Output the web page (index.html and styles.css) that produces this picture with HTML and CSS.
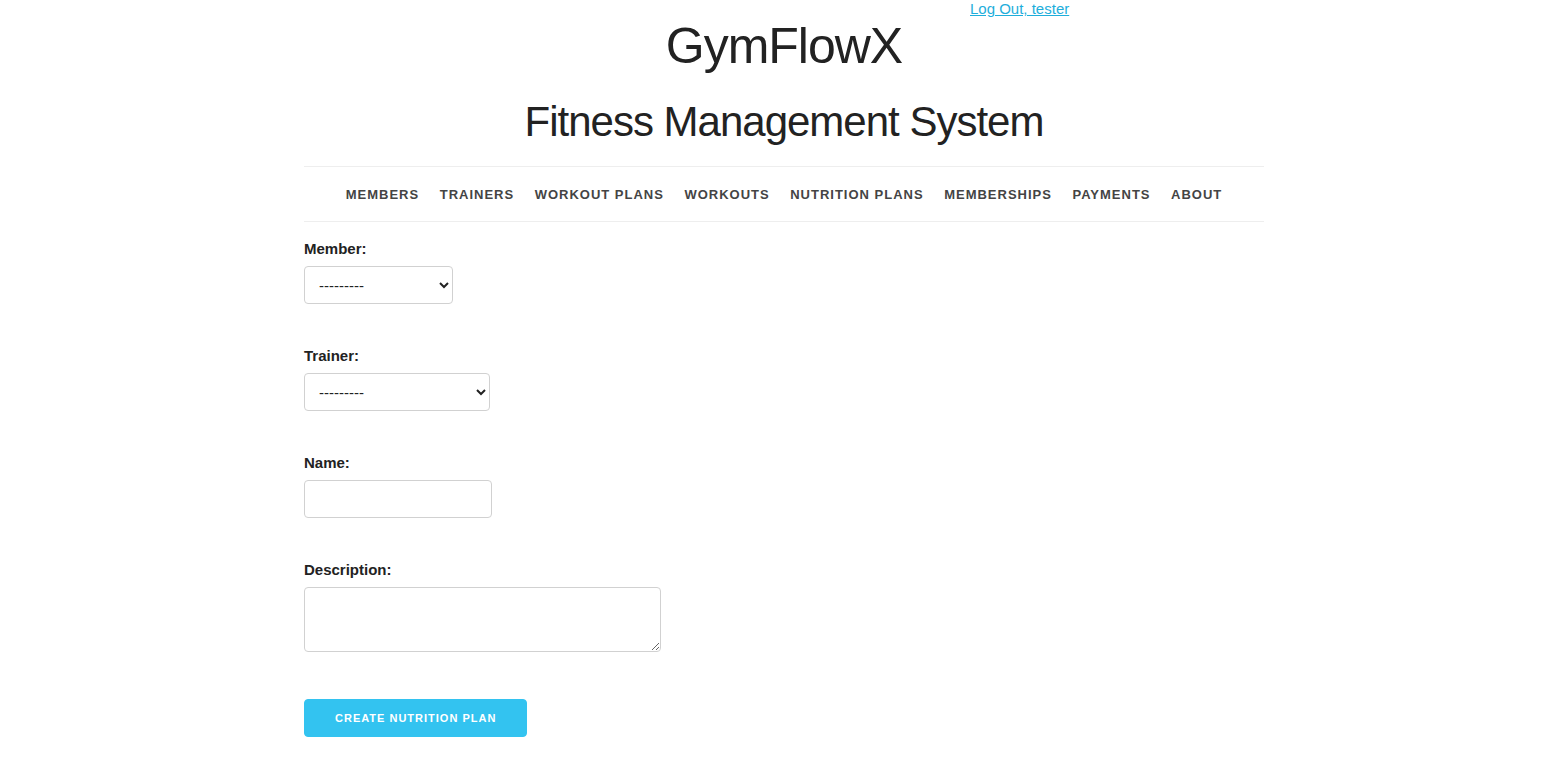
FILE: index.html
```html
<!DOCTYPE html>
<html lang="en">
<head>
    <meta charset="UTF-8">
    <meta name="viewport" content="width=device-width, initial-scale=1.0">
    <title>GymFlowX - Create Nutrition Plan</title>
    <link rel="stylesheet" href="styles.css">
</head>
<body>
    <div class="container">
        <header class="site-header">
            <a class="logout" href="#">Log Out, tester</a>
            <h1>GymFlowX</h1>
            <h2>Fitness Management System</h2>
        </header>

        <nav class="main-nav">
            <a href="#">Members</a>
            <a href="#">Trainers</a>
            <a href="#">Workout Plans</a>
            <a href="#">Workouts</a>
            <a href="#">Nutrition Plans</a>
            <a href="#">Memberships</a>
            <a href="#">Payments</a>
            <a href="#">About</a>
        </nav>

        <form class="plan-form" onsubmit="return false;">
            <p class="field">
                <label for="id_member">Member:</label>
                <select id="id_member" class="select-member">
                    <option>---------</option>
                </select>
            </p>
            <p class="field">
                <label for="id_trainer">Trainer:</label>
                <select id="id_trainer" class="select-trainer">
                    <option>---------</option>
                </select>
            </p>
            <p class="field">
                <label for="id_name">Name:</label>
                <input type="text" id="id_name" class="input-name">
            </p>
            <p class="field field-last">
                <label for="id_description">Description:</label>
                <textarea id="id_description"></textarea>
            </p>
            <button type="submit" class="button-primary">Create Nutrition Plan</button>
        </form>
    </div>
</body>
</html>
```

FILE: styles.css
```css
body {
    margin: 0;
    font-family: "Liberation Sans", Arial, Helvetica, sans-serif;
    font-size: 15px;
    line-height: 1.6;
    color: #222;
    background-color: #fff;
}
.container {
    width: 960px;
    margin: 0 auto;
}
.site-header {
    position: relative;
    text-align: center;
    padding-top: 16px;
}
.logout {
    position: absolute;
    top: 0;
    left: 666px;
    line-height: 18px;
    color: #1EAEDB;
    text-decoration: underline;
}
h1, h2 {
    margin: 0 0 20px;
    font-weight: 400;
    letter-spacing: -1px;
}
h1 {
    font-size: 50px;
    line-height: 1.2;
}
h2 {
    font-size: 42px;
    line-height: 1.25;
    margin-bottom: 17px;
}
.main-nav {
    display: flex;
    justify-content: center;
    gap: 20.5px;
    border-top: 1px solid #eee;
    border-bottom: 1px solid #eee;
    padding: 18px 0 16px;
}
.main-nav a {
    font-size: 13px;
    font-weight: 700;
    letter-spacing: 1px;
    text-transform: uppercase;
    text-decoration: none;
    color: #444;
}
.plan-form {
    padding-top: 15px;
}
.field {
    margin: 0 0 40px;
}
label {
    display: block;
    font-weight: 700;
    margin-bottom: 5px;
}
select, input[type="text"], textarea {
    display: block;
    box-sizing: border-box;
    height: 38px;
    padding: 6px 10px;
    margin: 0;
    background-color: #fff;
    border: 1px solid #D1D1D1;
    border-radius: 4px;
    box-shadow: none;
    font-family: inherit;
    font-size: 15px;
    color: #222;
}
.select-member {
    width: 149px;
}
.select-trainer {
    width: 186px;
}
.input-name {
    width: 188px;
}
textarea {
    width: 357px;
    height: 65px;
    min-height: 65px;
}
.field-last {
    margin-bottom: 47px;
}
.button-primary {
    display: block;
    box-sizing: border-box;
    height: 38px;
    padding: 0 30px;
    background-color: #33C3F0;
    border: 1px solid #33C3F0;
    border-radius: 4px;
    color: #fff;
    font-family: inherit;
    font-size: 11px;
    font-weight: 700;
    letter-spacing: 1px;
    text-transform: uppercase;
    cursor: pointer;
}
```
